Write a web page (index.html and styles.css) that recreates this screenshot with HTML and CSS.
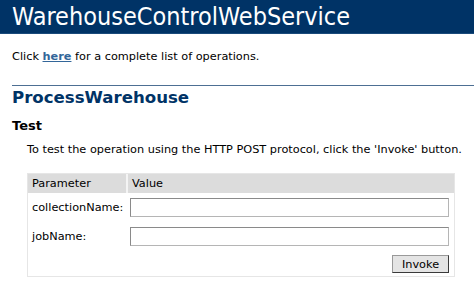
FILE: index.html
```html
<!DOCTYPE html>
<html>
<head>
<meta charset="utf-8">
<link rel="stylesheet" href="styles.css">
</head>
<body>
<div class="banner"><span class="heading1">WarehouseControlWebService</span></div>
<div class="content">
  <p class="intro">Click <a href="#">here</a> for a complete list of operations.</p>
  <h2 class="op">ProcessWarehouse</h2>
  <h3 class="sub">Test</h3>
  <p class="frmtext">To test the operation using the HTTP POST protocol, click the 'Invoke' button.</p>
  <form class="form">
    <table class="params">
      <tr>
        <td class="frmheader first">Parameter</td>
        <td class="frmheader">Value</td>
      </tr>
      <tr>
        <td class="label">collectionName:</td>
        <td class="field"><input class="frmInput" type="text"></td>
      </tr>
      <tr>
        <td class="label">jobName:</td>
        <td class="field"><input class="frmInput" type="text"></td>
      </tr>
      <tr>
        <td></td>
        <td class="right"><button type="button" class="button">Invoke</button></td>
      </tr>
    </table>
  </form>
</div>
</body>
</html>
```
FILE: styles.css
```css
html, body {
  margin: 0;
  padding: 0;
  background: #ffffff;
  color: #000000;
  font-family: "DejaVu Sans", Verdana, sans-serif;
}
.banner {
  background: #003366;
  height: 34px;
  padding-left: 12px;
  box-sizing: border-box;
  line-height: 34px;
  border-bottom: 1px solid #1a4a7a;
}
.heading1 {
  color: #ffffff;
  font-family: "DejaVu Sans Condensed", "DejaVu Sans", sans-serif;
  font-size: 25px;
  font-weight: normal;
}
.content {
  font-size: 11.3px;
}
.intro {
  margin: 0;
  padding: 15px 0 0 12px;
  height: 16px;
  line-height: 16px;
}
.intro a {
  color: #336699;
  font-weight: bold;
  text-decoration: underline;
}
.op {
  margin: 20px 0 0 12px;
  border-top: 1px solid #4d6f93;
  color: #003366;
  font-size: 16.6px;
  font-weight: bold;
  line-height: 22px;
  padding-top: 1px;
}
.sub {
  margin: 9px 0 0 12px;
  font-size: 13px;
  font-weight: bold;
  line-height: 16px;
}
.frmtext {
  margin: 8px 0 0 27px;
  line-height: 15px;
}
.form {
  margin: 16px 0 0 27px;
}
.params {
  width: 428px;
  border: 1px solid #e6e6e6;
  border-collapse: separate;
  border-spacing: 0;
}
.params td {
  padding: 0;
}
.frmheader {
  background: #dcdcdc;
  height: 19px;
  line-height: 19px;
  padding-left: 4px !important;
}
.frmheader.first {
  width: 94px;
  border-right: 2px solid #f4f4f4;
}
.label {
  padding-left: 4px !important;
}
.field {
  padding: 5px 0 5px 0 !important;
}
.frmInput {
  display: block;
  box-sizing: border-box;
  width: 319px;
  height: 19px;
  margin: 0 0 0 2px;
  border: 1px solid #8a8a8a;
  border-right-color: #b5b5b5;
  border-bottom-color: #b5b5b5;
  background: #fff;
}
.right {
  text-align: right;
  padding: 4px 5px 3px 0 !important;
}
.button {
  display: inline-block;
  vertical-align: top;
  font-family: "DejaVu Sans", Verdana, sans-serif;
  font-size: 11.3px;
  height: 18px;
  width: 57px;
  padding: 0;
  background: #e4e4e4;
  border: 1px solid #3a3a3a;
  border-top-color: #999;
  border-left-color: #999;
  color: #000;
}
```
